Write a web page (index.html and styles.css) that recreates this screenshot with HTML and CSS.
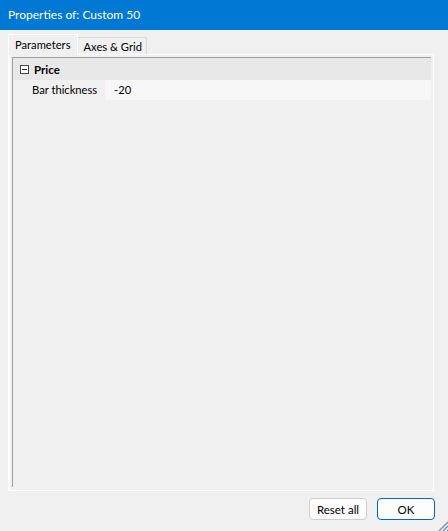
FILE: index.html
```html
<!DOCTYPE html>
<html>
<head>
<meta charset="utf-8">
<link rel="stylesheet" href="styles.css">
</head>
<body>
<div class="window">
  <div class="titlebar">Properties of: Custom 50</div>
  <div class="content">
    <div class="tabs">
      <div class="tab active">Parameters</div>
      <div class="tab">Axes &amp; Grid</div>
    </div>
    <div class="page">
      <div class="grid">
        <div class="cat"><span class="toggle"></span><span class="cat-name">Price</span></div>
        <div class="row">
          <div class="label">Bar thickness</div>
          <div class="value">-20</div>
        </div>
      </div>
    </div>
    <div class="buttons">
      <button class="btn">Reset all</button>
      <button class="btn primary">OK</button>
    </div>
  </div>
  <svg class="grip" width="12" height="12" viewBox="0 0 12 12"><path d="M3 12L12 3M7 12L12 7M11 12L12 11" stroke="#6a8fb8" stroke-width="1.3"/></svg>
</div>
</body>
</html>
```

FILE: styles.css
```css
html, body {
  margin: 0;
  padding: 0;
}
body {
  width: 448px;
  height: 531px;
  overflow: hidden;
  background: #f0f0f0;
  font-family: Lato, "Noto Sans", sans-serif;
  font-size: 11.2px;
  color: #000;
}
.window {
  position: relative;
  width: 448px;
  height: 531px;
  display: flex;
  flex-direction: column;
  background: #f0f0f0;
}
.titlebar {
  height: 30px;
  background: #0078d4;
  color: #fff;
  font-size: 12px;
  line-height: 30px;
  padding-left: 8px;
  flex: none;
}
.content {
  flex: 1;
  display: flex;
  flex-direction: column;
  padding: 5px 10px 0 8px;
}
.tabs {
  display: flex;
  align-items: flex-end;
  height: 20px;
}
.tab {
  height: 17px;
  line-height: 18px;
  padding: 0 4px 0 5px;
  background: #f0f0f0;
  border: 1px solid #d9d9d9;
  border-bottom: none;
  border-left: none;
}
.tab.active {
  height: 20px;
  line-height: 19px;
  background: #f0f0f0;
  border: 1px solid #fff;
  border-bottom: none;
  padding: 0 7px 0 6px;
  position: relative;
  z-index: 1;
}
.page {
  height: 437px;
  border: 1px solid #fff;
  border-left: 2px solid #fff;
  padding: 2px 2px 3px 2px;
  display: flex;
  margin-top: -1px;
  box-sizing: border-box;
  width: 426px;
}
.grid {
  flex: 1;
  border-top: 1px solid #a0a0a0;
  border-left: 1px solid #a0a0a0;
  background: #f0f0f0;
}
.cat {
  height: 22px;
  background: #e8e8e8;
  display: flex;
  align-items: center;
  padding-left: 7px;
  font-size: 11.5px;
}
.toggle {
  width: 7px;
  height: 7px;
  border: 1px solid #444;
  position: relative;
  margin-right: 5px;
  background: #fff;
}
.toggle::after {
  content: "";
  position: absolute;
  left: 1px;
  top: 3px;
  width: 5px;
  height: 1px;
  background: #222;
}
.cat-name {
  font-weight: bold;
}
.row {
  display: flex;
  height: 20px;
  line-height: 20px;
}
.label {
  width: 73px;
  padding-left: 19px;
  background: #f0f0f0;
}
.value {
  flex: 1;
  background: #f7f7f7;
  padding-left: 9px;
}
.buttons {
  display: flex;
  justify-content: flex-end;
  gap: 10px;
  padding-top: 7px;
  padding-right: 3px;
}
.btn {
  font-family: Lato, "Noto Sans", sans-serif;
  font-size: 11.5px;
  height: 22px;
  width: 58px;
  padding: 0;
  background: #fdfdfd;
  border: 1px solid #cfcfcf;
  border-radius: 4px;
  color: #000;
}
.btn.primary {
  border: 1px solid #0067c0;
}
.grip {
  position: absolute;
  right: 0;
  bottom: 0;
}
```
